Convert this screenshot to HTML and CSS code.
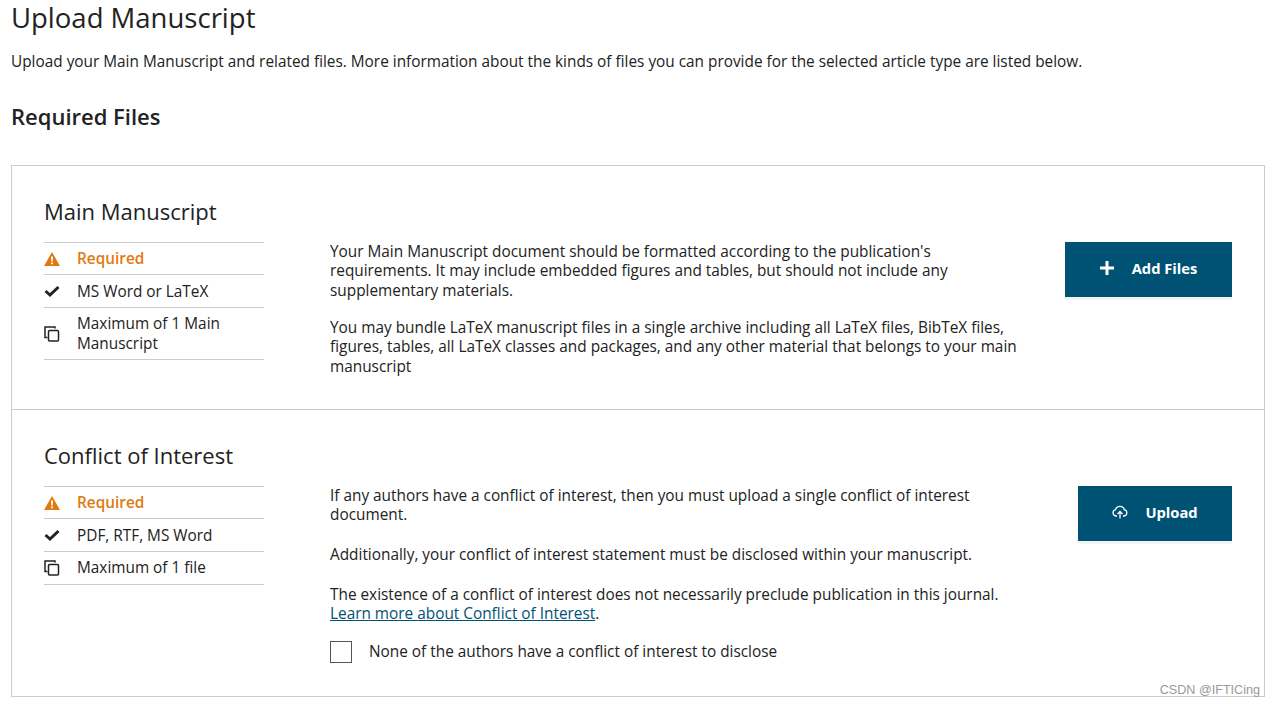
FILE: index.html
```html
<!DOCTYPE html>
<html lang="en">

<head>
    <meta charset="UTF-8"/>
    <meta name="viewport" content="width=device-width, initial-scale=1.0"/>
    <title>Upload Manuscript</title>
    <link rel="stylesheet" href="styles.css">
</head>

<body>
<div class="page">
    <h1>Upload Manuscript</h1>
    <p class="intro">Upload your Main Manuscript and related files. More information about the kinds of files you can provide for the selected article type are listed below.</p>
    <h2>Required Files</h2>

    <div class="card">
        <section class="file-row">
            <h3>Main Manuscript</h3>
            <div class="file-body">
                <ul class="rules">
                    <li class="required">
                        <svg class="icon" viewBox="0 0 16 16"><path d="M8 1 16 15H0Z" fill="#e07a10"/><path d="M7 5.500h2l-.3 5H7.300ZM7.100 11.500h1.800v1.800H7.100Z" fill="#fff"/></svg>
                        <span>Required</span>
                    </li>
                    <li>
                        <svg class="icon" viewBox="0 0 16 16"><path d="M1.500 8 6 12 14.500 4" fill="none" stroke="#222" stroke-width="3"/></svg>
                        <span>MS Word or LaTeX</span>
                    </li>
                    <li>
                        <svg class="icon" viewBox="0 0 16 16"><path d="M11 2.500V1H1v10.500h2.500" fill="none" stroke="#222" stroke-width="1.500"/><rect x="4.500" y="4.500" width="10" height="10.500" rx="1" fill="none" stroke="#222" stroke-width="1.500"/></svg>
                        <span>Maximum of 1 Main Manuscript</span>
                    </li>
                </ul>
                <div class="desc">
                    <p>Your Main Manuscript document should be formatted according to the publication's requirements. It may include embedded figures and tables, but should not include any supplementary materials.</p>
                    <p>You may bundle LaTeX manuscript files in a single archive including all LaTeX files, BibTeX files, figures, tables, all LaTeX classes and packages, and any other material that belongs to your main manuscript</p>
                </div>
                <div class="action">
                    <button class="btn btn-add">
                        <svg class="btn-icon" viewBox="0 0 14 14"><path d="M7 0v14M0 7h14" stroke="#fff" stroke-width="3"/></svg>
                        Add Files
                    </button>
                </div>
            </div>
        </section>

        <section class="file-row">
            <h3>Conflict of Interest</h3>
            <div class="file-body">
                <ul class="rules">
                    <li class="required">
                        <svg class="icon" viewBox="0 0 16 16"><path d="M8 1 16 15H0Z" fill="#e07a10"/><path d="M7 5.500h2l-.3 5H7.300ZM7.100 11.500h1.800v1.800H7.100Z" fill="#fff"/></svg>
                        <span>Required</span>
                    </li>
                    <li>
                        <svg class="icon" viewBox="0 0 16 16"><path d="M1.500 8 6 12 14.500 4" fill="none" stroke="#222" stroke-width="3"/></svg>
                        <span>PDF, RTF, MS Word</span>
                    </li>
                    <li>
                        <svg class="icon" viewBox="0 0 16 16"><path d="M11 2.500V1H1v10.500h2.500" fill="none" stroke="#222" stroke-width="1.500"/><rect x="4.500" y="4.500" width="10" height="10.500" rx="1" fill="none" stroke="#222" stroke-width="1.500"/></svg>
                        <span>Maximum of 1 file</span>
                    </li>
                </ul>
                <div class="desc desc-wide">
                    <p>If any authors have a conflict of interest, then you must upload a single conflict of interest document.</p>
                    <p>Additionally, your conflict of interest statement must be disclosed within your manuscript.</p>
                    <p>The existence of a conflict of interest does not necessarily preclude publication in this journal. <a href="#">Learn more about Conflict of Interest</a>.</p>
                    <label class="check">
                        <span class="box"></span>
                        None of the authors have a conflict of interest to disclose
                    </label>
                </div>
                <div class="action">
                    <button class="btn btn-upload">
                        <svg class="btn-icon" viewBox="0 0 16 16"><path d="M5 12H4A3.200 3.200 0 0 1 3.500 5.700 4.600 4.600 0 0 1 12.300 5.700 3.200 3.200 0 0 1 12 12H11M8 14.500V7.500M5.500 10 8 7.500 10.500 10" fill="none" stroke="#fff" stroke-width="1.300"/></svg>
                        Upload
                    </button>
                </div>
            </div>
        </section>
    </div>
</div>
<div class="watermark">CSDN @IFTICing</div>
</body>
</html>
```

FILE: styles.css
```css
* {
    box-sizing: border-box;
}

body {
    margin: 0;
    font-family: "Open Sans", "Noto Sans", sans-serif;
    font-size: 15.360px;
    line-height: 19.600px;
    color: #222;
    background: #fff;
}

.page {
    padding: 0 9px 0 11px;
    height: 706px;
    overflow: hidden;
}

h1 {
    margin: 0;
    font-size: 27.500px;
    line-height: 36px;
    font-weight: 400;
}

.intro {
    margin: 16px 0 0 0;
}

h2 {
    margin: 29px 0 0 0;
    font-size: 22px;
    line-height: 30px;
    font-weight: 600;
}

.card {
    margin-top: 34px;
    border: 1px solid #ccc;
}

.file-row {
    padding: 30px 32px 0 32px;
    height: 244px;
    border-bottom: 1px solid #ccc;
}

.file-row:last-child {
    height: 286px;
    border-bottom: none;
}

h3 {
    margin: 0;
    font-size: 22px;
    line-height: 30px;
    font-weight: 400;
}

.file-body {
    display: flex;
    margin-top: 16px;
}

.rules {
    margin: 0;
    padding: 0;
    list-style: none;
    width: 220px;
    flex-shrink: 0;
    border-top: 1px solid #ccc;
    align-self: flex-start;
}

.rules li {
    display: flex;
    align-items: center;
    padding: 6.400px 0 5.700px 0;
    border-bottom: 1px solid #ccc;
}

.rules li.required {
    color: #e07a10;
    font-weight: 600;
}

.icon {
    width: 16px;
    height: 16px;
    margin-right: 17px;
    flex-shrink: 0;
}

.desc {
    width: 690px;
    margin-left: 66px;
    flex-shrink: 0;
}

.desc p {
    margin: 0 0 17.500px 0;
}

.desc-wide {
    padding-top: 0.300px;
}

.desc-wide p {
    margin-bottom: 20px;
}

.desc a {
    color: #005274;
}

.check {
    display: flex;
    align-items: center;
    margin-top: -3px;
}

.box {
    width: 22px;
    height: 22px;
    margin-right: 17px;
    border: 1px solid #555;
    background: #fff;
}

.action {
    flex: 1;
    display: flex;
    justify-content: flex-end;
    align-items: flex-start;
}

.btn {
    display: flex;
    align-items: center;
    justify-content: center;
    height: 55px;
    padding: 0 0 2px 0;
    border: none;
    box-shadow: 0 3px 0 #f3f3f3;
    background: #005274;
    color: #fff;
    font-family: inherit;
    font-size: 14.720px;
    font-weight: 700;
    cursor: pointer;
}

.btn-add {
    width: 167px;
}

.btn-upload {
    width: 154px;
}

.btn-icon {
    width: 14px;
    height: 14px;
    margin-right: 18px;
}

.btn-upload .btn-icon {
    width: 16px;
    height: 16px;
    margin-right: 17px;
}

.watermark {
    position: absolute;
    right: 14px;
    top: 681px;
    font-family: "Liberation Sans", sans-serif;
    font-size: 12.600px;
    line-height: 18px;
    color: #999;
}
```
